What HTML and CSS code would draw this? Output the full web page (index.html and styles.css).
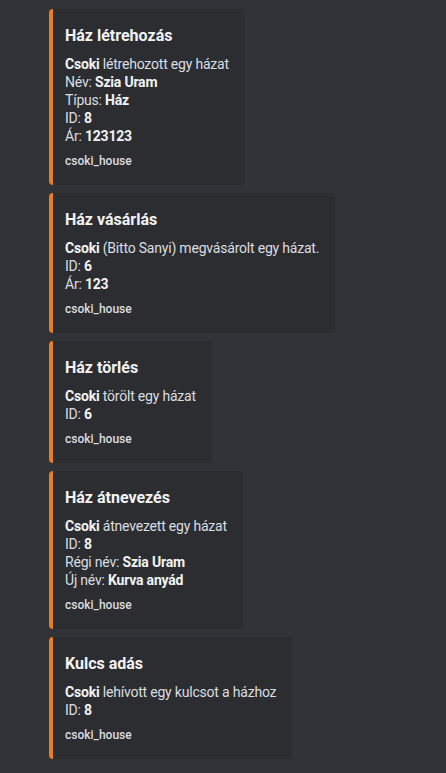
FILE: index.html
```html
<!DOCTYPE html>
<html lang="hu">
<head>
<meta charset="utf-8">
<link rel="stylesheet" href="styles.css">
</head>
<body>
<div class="feed">
  <article class="embed">
    <h3 class="embed-title">Ház létrehozás</h3>
    <div class="embed-desc">
      <div><b>Csoki</b> létrehozott egy házat</div>
      <div>Név: <b>Szia Uram</b></div>
      <div>Típus: <b>Ház</b></div>
      <div>ID: <b>8</b></div>
      <div>Ár: <b>123123</b></div>
    </div>
    <div class="embed-footer">csoki_house</div>
  </article>
  <article class="embed">
    <h3 class="embed-title">Ház vásárlás</h3>
    <div class="embed-desc">
      <div><b>Csoki</b> (Bitto Sanyi) megvásárolt egy házat.</div>
      <div>ID: <b>6</b></div>
      <div>Ár: <b>123</b></div>
    </div>
    <div class="embed-footer">csoki_house</div>
  </article>
  <article class="embed">
    <h3 class="embed-title">Ház törlés</h3>
    <div class="embed-desc">
      <div><b>Csoki</b> törölt egy házat</div>
      <div>ID: <b>6</b></div>
    </div>
    <div class="embed-footer">csoki_house</div>
  </article>
  <article class="embed">
    <h3 class="embed-title">Ház átnevezés</h3>
    <div class="embed-desc">
      <div><b>Csoki</b> átnevezett egy házat</div>
      <div>ID: <b>8</b></div>
      <div>Régi név: <b>Szia Uram</b></div>
      <div>Új név: <b>Kurva anyád</b></div>
    </div>
    <div class="embed-footer">csoki_house</div>
  </article>
  <article class="embed">
    <h3 class="embed-title">Kulcs adás</h3>
    <div class="embed-desc">
      <div><b>Csoki</b> lehívott egy kulcsot a házhoz</div>
      <div>ID: <b>8</b></div>
    </div>
    <div class="embed-footer">csoki_house</div>
  </article>
</div>
</body>
</html>
```
FILE: styles.css
```css
html, body {
  margin: 0;
  padding: 0;
  background: #313338;
}
body {
  font-family: Roboto, "Noto Sans", sans-serif;
  color: #dbdee1;
}
.feed {
  display: flex;
  flex-direction: column;
  align-items: flex-start;
  gap: 8px;
  padding: 9px 0 0 49px;
}
.embed {
  background: #2b2d31;
  border-left: 4px solid #e67e22;
  border-radius: 4px;
  padding: 8px 16px 16px 12px;
  width: fit-content;
}
.embed-title {
  margin: 8px 0 0;
  font-size: 16px;
  line-height: 22px;
  font-weight: 700;
  color: #f2f3f5;
}
.embed-desc {
  margin-top: 8px;
  font-size: 14px;
  line-height: 18px;
  font-weight: 400;
  letter-spacing: -0.2px;
  color: #dbdee1;
}
.embed-desc b {
  font-weight: 700;
  color: #f2f3f5;
}
.embed-footer {
  margin-top: 8px;
  font-size: 12px;
  line-height: 16px;
  font-weight: 500;
  color: #dbdee1;
}
```
